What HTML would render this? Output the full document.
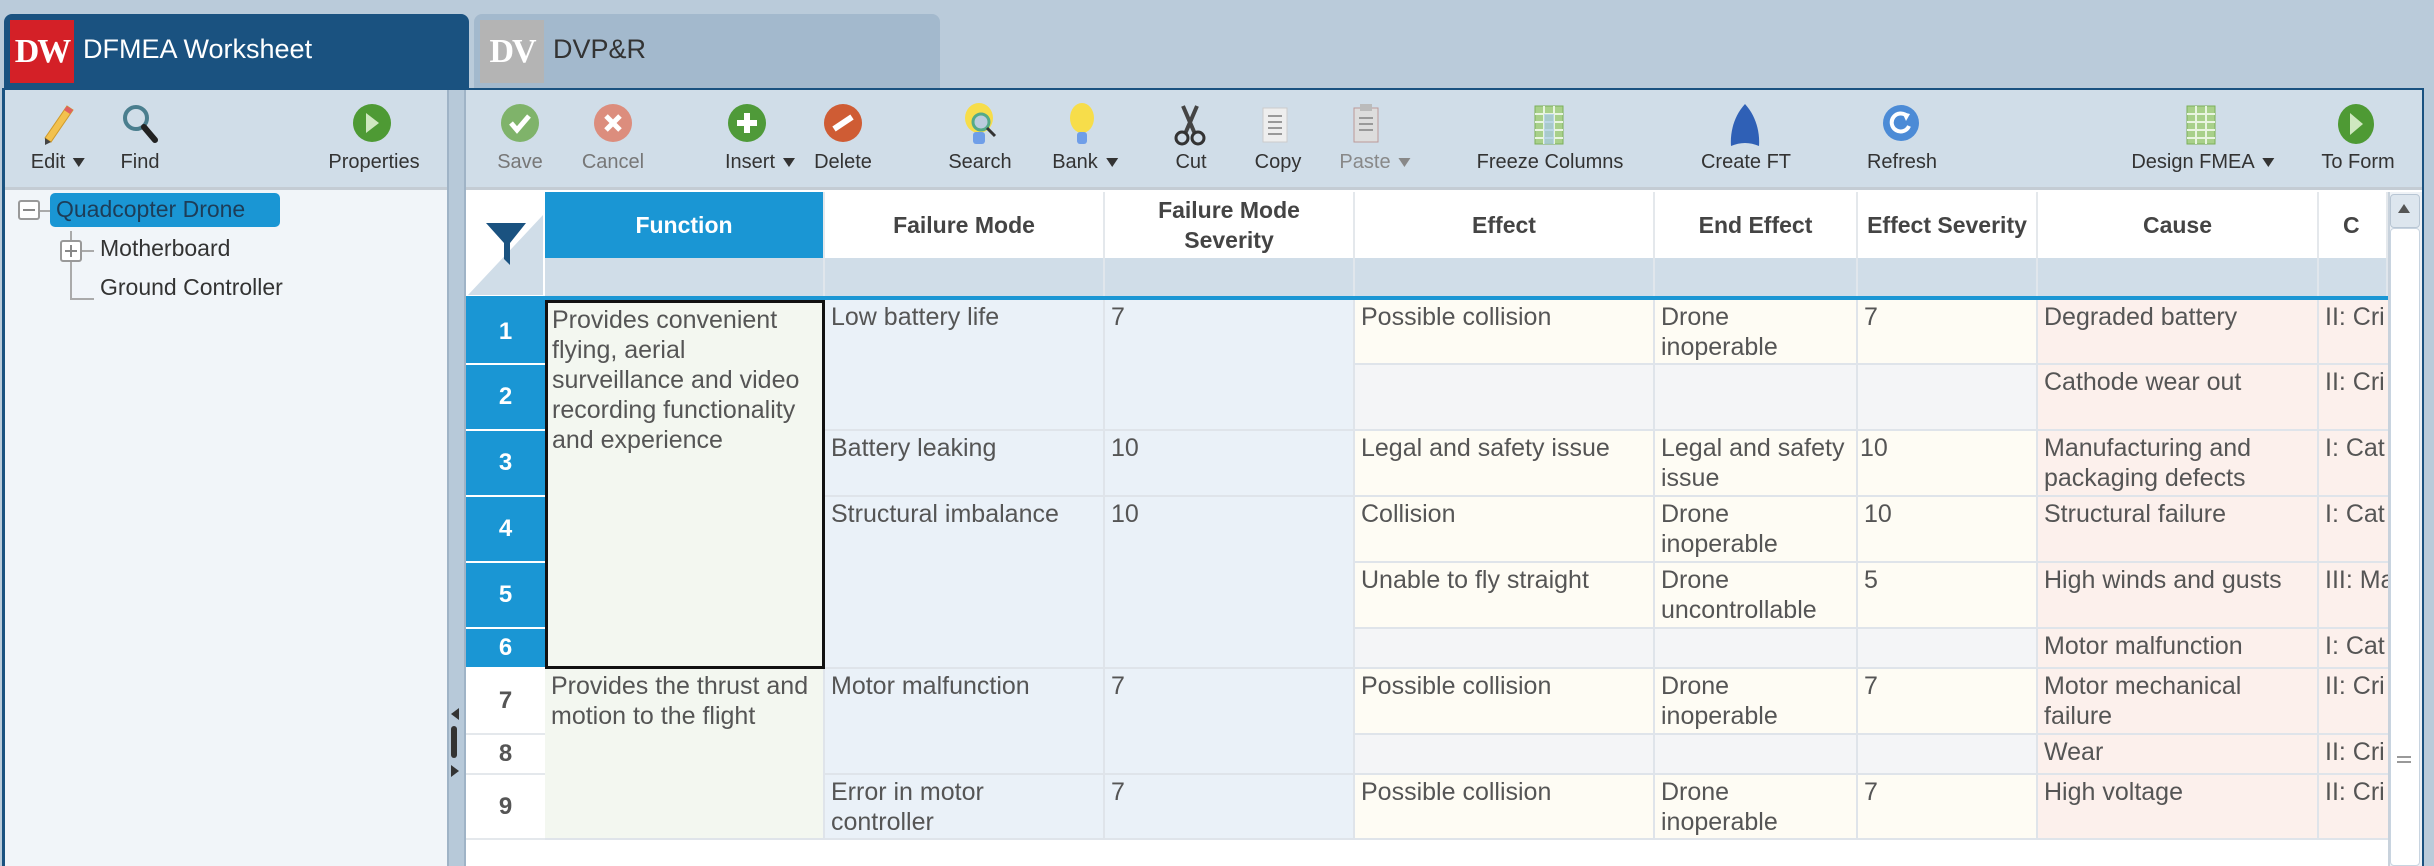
<!DOCTYPE html>
<html><head><meta charset="utf-8"><style>
*{margin:0;padding:0;box-sizing:border-box}
body{width:2434px;height:866px;overflow:hidden;background:#bacbda;font-family:"Liberation Sans",Arial,sans-serif;position:relative}
.a{position:absolute}
.c{position:absolute;font-size:25px;line-height:30px;color:#555;padding:2px 6px;overflow:hidden;white-space:nowrap;border-right:2px solid #dfe4ea;border-bottom:2px solid #dfe4ea}
.h{position:absolute;top:192px;height:66px;background:#fff;border-right:2px solid #e4e8ec;display:flex;align-items:center;justify-content:center;text-align:center;font-weight:bold;font-size:23px;line-height:30px;color:#444;overflow:hidden}
.f{position:absolute;top:258px;height:38px;background:#d0dde8;border-right:2px solid #e0e6ec}
.n{position:absolute;left:466px;width:79px;background:#1a96d4;color:#fff;font-weight:bold;font-size:24px;display:flex;align-items:center;justify-content:center;border-bottom:2px solid #fff}
.lb{position:absolute;top:150px;font-size:20px;line-height:24px;color:#333;white-space:nowrap;transform:translateX(-50%)}
.tri{display:inline-block;width:0;height:0;border-left:6px solid transparent;border-right:6px solid transparent;border-top:9px solid #333;margin-left:8px;vertical-align:middle}
.ic{position:absolute;top:102px;transform:translateX(-50%)}
.tr{font-size:23px;color:#333;position:absolute;white-space:nowrap}
</style></head><body>
<!-- tabs -->
<div class="a" style="left:4px;top:14px;width:465px;height:76px;background:#1a5280;border-radius:8px 8px 0 0"></div>
<div class="a" style="left:10px;top:20px;width:64px;height:63px;background:#d42027;color:#fff;font-family:'Liberation Serif',serif;font-weight:bold;font-size:34px;line-height:63px;text-align:center;letter-spacing:-2px">DW</div>
<div class="a" style="left:83px;top:34px;color:#fff;font-size:27px">DFMEA Worksheet</div>
<div class="a" style="left:474px;top:14px;width:466px;height:75px;background:#a3b9cd;border-radius:8px 8px 0 0"></div>
<div class="a" style="left:480px;top:20px;width:64px;height:63px;background:#b4b4b4;color:#fff;font-family:'Liberation Serif',serif;font-weight:bold;font-size:34px;line-height:63px;text-align:center;letter-spacing:-2px">DV</div>
<div class="a" style="left:553px;top:34px;color:#333;font-size:27px">DVP&amp;R</div>
<!-- main frame -->
<div class="a" style="left:2px;top:88px;width:2422px;height:778px;background:#1a5280"></div>
<div class="a" style="left:5px;top:90px;width:442px;height:776px;background:#f1f5f9"></div>
<div class="a" style="left:5px;top:90px;width:442px;height:100px;background:#d0dde8;border-bottom:3px solid #c4ccd4"></div>
<div class="a" style="left:447px;top:90px;width:19px;height:776px;background:#b7c9d9;border-left:2px solid #9fb3c6;border-right:2px solid #9fb3c6"></div>
<div class="a" style="left:466px;top:90px;width:1956px;height:776px;background:#fff"></div>
<div class="a" style="left:466px;top:90px;width:1956px;height:100px;background:#d0dde8;border-bottom:3px solid #c4ccd4"></div>
<!-- splitter arrows -->
<div class="a" style="left:451px;top:708px;width:0;height:0;border-top:6px solid transparent;border-bottom:6px solid transparent;border-right:8px solid #333"></div>
<div class="a" style="left:451px;top:726px;width:6px;height:32px;background:#333;border-radius:3px"></div>
<div class="a" style="left:451px;top:765px;width:0;height:0;border-top:6px solid transparent;border-bottom:6px solid transparent;border-left:8px solid #333"></div>
<!-- left toolbar -->
<svg class="ic" style="left:57px" width="40" height="44" viewBox="0 0 40 44"><path d="M30 4 L36 8 L14 40 L8 36 Z" fill="#f2c14e" stroke="#d09a2a"/><path d="M30 4 L36 8 L33 12 L27 8Z" fill="#e06060"/><path d="M8 36 L14 40 L8 43Z" fill="#444"/></svg>
<svg class="ic" style="left:140px" width="40" height="44" viewBox="0 0 40 44"><circle cx="16" cy="16" r="11" fill="none" stroke="#4a7e8e" stroke-width="4"/><path d="M24 25 L35 38" stroke="#222" stroke-width="6" stroke-linecap="round"/></svg>
<svg class="ic" style="left:372px" width="42" height="42" viewBox="0 0 42 42"><circle cx="21" cy="21" r="19" fill="#4e9a34"/><path d="M15 11 L28 21 L15 31Z" fill="#cfe8c0"/></svg>
<div class="lb" style="left:58px">Edit<span class="tri"></span></div>
<div class="lb" style="left:140px">Find</div>
<div class="lb" style="left:374px">Properties</div>
<!-- tree -->
<div class="a" style="left:18px;top:200px;width:22px;height:20px;border:2px solid #999;border-radius:3px;background:#fff"></div>
<div class="a" style="left:23px;top:209px;width:12px;height:2px;background:#888"></div>
<div class="a" style="left:40px;top:210px;width:10px;height:2px;background:#aaa"></div>
<div class="a" style="left:50px;top:193px;width:230px;height:34px;background:#1a96d4;border-radius:5px"></div>
<div class="tr" style="left:56px;top:196px;color:#1d3d58">Quadcopter Drone</div>
<div class="a" style="left:70px;top:231px;width:2px;height:69px;background:#aaa"></div>
<div class="a" style="left:70px;top:298px;width:24px;height:2px;background:#aaa"></div>
<div class="a" style="left:60px;top:240px;width:22px;height:22px;border:2px solid #999;border-radius:3px;background:#fff"></div>
<div class="a" style="left:65px;top:250px;width:12px;height:2px;background:#888"></div>
<div class="a" style="left:70px;top:245px;width:2px;height:12px;background:#888"></div>
<div class="a" style="left:82px;top:250px;width:12px;height:2px;background:#aaa"></div>
<div class="tr" style="left:100px;top:235px">Motherboard</div>
<div class="tr" style="left:100px;top:274px">Ground Controller</div>
<!-- right toolbar icons -->
<svg class="ic" style="left:520px" width="42" height="42"><circle cx="21" cy="21" r="19" fill="#7fb36a"/><path d="M12 21 L18 28 L30 14" stroke="#fff" stroke-width="5" fill="none"/></svg>
<svg class="ic" style="left:613px" width="42" height="42"><circle cx="21" cy="21" r="19" fill="#dc8d7d"/><path d="M14 14 L28 28 M28 14 L14 28" stroke="#fff" stroke-width="5"/></svg>
<svg class="ic" style="left:747px" width="42" height="42"><circle cx="21" cy="21" r="19" fill="#4f9a39"/><path d="M21 11 V31 M11 21 H31" stroke="#fff" stroke-width="6"/></svg>
<svg class="ic" style="left:843px" width="42" height="42"><circle cx="21" cy="21" r="19" fill="#cf5c34"/><path d="M12 27 L30 15" stroke="#fff" stroke-width="6"/></svg>
<svg class="ic" style="left:980px" width="42" height="46"><ellipse cx="20" cy="16" rx="14" ry="15" fill="#f7dd4a"/><rect x="14" y="30" width="12" height="12" rx="3" fill="#6f9ee8"/><circle cx="22" cy="20" r="8" fill="#bcd" stroke="#5a8" stroke-width="3"/><path d="M28 26 L36 34" stroke="#333" stroke-width="3"/></svg>
<svg class="ic" style="left:1082px" width="42" height="46"><ellipse cx="21" cy="16" rx="12" ry="15" fill="#f7dd4a"/><rect x="16" y="30" width="10" height="12" rx="3" fill="#6f9ee8"/></svg>
<svg class="ic" style="left:1190px" width="42" height="46"><path d="M14 4 L26 32 M28 4 L16 32" stroke="#444" stroke-width="4"/><circle cx="13" cy="36" r="6" fill="none" stroke="#333" stroke-width="3"/><circle cx="29" cy="36" r="6" fill="none" stroke="#333" stroke-width="3"/></svg>
<svg class="ic" style="left:1276px" width="42" height="46"><rect x="8" y="6" width="24" height="34" fill="#eee" stroke="#ccc"/><path d="M13 14H27M13 20H27M13 26H27M13 32H27" stroke="#999" stroke-width="2"/></svg>
<svg class="ic" style="left:1366px" width="42" height="46"><rect x="9" y="6" width="24" height="34" fill="#ddd" stroke="#b99"/><rect x="15" y="2" width="12" height="7" fill="#bbb"/><path d="M14 16H28M14 22H28M14 28H28" stroke="#999" stroke-width="2"/></svg>
<svg class="ic" style="left:1549px" width="42" height="46"><rect x="7" y="4" width="28" height="38" fill="#a8d08a" stroke="#7bb05a"/><path d="M7 12H35M7 20H35M7 28H35M7 36H35M16 4V42M26 4V42" stroke="#e8f4e0" stroke-width="2"/><rect x="16" y="12" width="10" height="30" fill="#a8c8e8" opacity=".7"/></svg>
<svg class="ic" style="left:1745px" width="42" height="48"><path d="M21 2 C10 14 6 30 7 44 Q21 38 35 44 C36 30 32 14 21 2Z" fill="#2f60b6"/></svg>
<svg class="ic" style="left:1901px" width="42" height="42"><circle cx="21" cy="21" r="18" fill="#4c8bd6"/><path d="M27 14 A9 9 0 1 0 29 24" stroke="#fff" stroke-width="4" fill="none"/><path d="M22 10 L30 12 L26 19Z" fill="#fff"/></svg>
<svg class="ic" style="left:2201px" width="42" height="46"><rect x="7" y="4" width="28" height="38" fill="#a8d08a" stroke="#7bb05a"/><path d="M7 12H35M7 20H35M7 28H35M7 36H35M16 4V42M26 4V42" stroke="#e8f4e0" stroke-width="2"/></svg>
<svg class="ic" style="left:2356px" width="42" height="44"><ellipse cx="21" cy="22" rx="18" ry="20" fill="#4e9a34"/><path d="M15 11 L28 22 L15 33Z" fill="#cfe8c0"/></svg>
<div class="lb" style="left:520px;color:#777">Save</div>
<div class="lb" style="left:613px;color:#777">Cancel</div>
<div class="lb" style="left:760px">Insert<span class="tri"></span></div>
<div class="lb" style="left:843px">Delete</div>
<div class="lb" style="left:980px">Search</div>
<div class="lb" style="left:1085px">Bank<span class="tri"></span></div>
<div class="lb" style="left:1191px">Cut</div>
<div class="lb" style="left:1278px">Copy</div>
<div class="lb" style="left:1375px;color:#888">Paste<span class="tri" style="border-top-color:#888"></span></div>
<div class="lb" style="left:1550px">Freeze Columns</div>
<div class="lb" style="left:1746px">Create FT</div>
<div class="lb" style="left:1902px">Refresh</div>
<div class="lb" style="left:2203px">Design FMEA<span class="tri"></span></div>
<div class="lb" style="left:2358px">To Form</div>
<!-- header -->
<div class="a" style="left:466px;top:192px;width:79px;height:104px;background:#fff"></div>
<svg class="a" style="left:468px;top:195px" width="75" height="100"><path d="M75 20 L75 100 L0 100Z" fill="#d0dde8"/><path d="M18 28 H58 L42 48 V70 L36 64 V48Z" fill="#1a5280"/></svg>
<div class="h" style="left:545px;width:280px;background:#1a96d4;color:#fff">Function</div>
<div class="h" style="left:825px;width:280px">Failure Mode</div>
<div class="h" style="left:1105px;width:250px">Failure Mode<br>Severity</div>
<div class="h" style="left:1355px;width:300px">Effect</div>
<div class="h" style="left:1655px;width:203px">End Effect</div>
<div class="h" style="left:1858px;width:180px">Effect Severity</div>
<div class="h" style="left:2038px;width:281px">Cause</div>
<div class="h" style="left:2319px;width:69px;justify-content:flex-start;padding-left:24px">C</div>
<div class="f" style="left:545px;width:280px"></div><div class="f" style="left:825px;width:280px"></div><div class="f" style="left:1105px;width:250px"></div><div class="f" style="left:1355px;width:300px"></div><div class="f" style="left:1655px;width:203px"></div><div class="f" style="left:1858px;width:180px"></div><div class="f" style="left:2038px;width:281px"></div><div class="f" style="left:2319px;width:69px"></div>
<div class="a" style="left:466px;top:296px;width:1922px;height:4px;background:#1a96d4"></div>
<!-- row numbers -->
<div class="n" style="top:300px;height:65px">1</div>
<div class="n" style="top:365px;height:66px">2</div>
<div class="n" style="top:431px;height:66px">3</div>
<div class="n" style="top:497px;height:66px">4</div>
<div class="n" style="top:563px;height:66px">5</div>
<div class="n" style="top:629px;height:40px">6</div>
<div class="n" style="top:669px;height:66px;background:#fff;color:#555;border-bottom:2px solid #e4e8ec">7</div>
<div class="n" style="top:735px;height:40px;background:#fff;color:#555;border-bottom:2px solid #e4e8ec">8</div>
<div class="n" style="top:775px;height:65px;background:#fff;color:#555;border-bottom:2px solid #e4e8ec">9</div>
<!-- function -->
<div class="c" style="left:545px;top:300px;width:280px;height:369px;background:#f3f7f0;border:3px solid #111;white-space:normal;padding-left:4px">Provides convenient flying, aerial surveillance and video recording functionality and experience</div>
<div class="c" style="left:545px;top:669px;width:280px;height:171px;background:#f3f7f0;white-space:normal;padding-right:0">Provides the thrust and motion to the flight</div>
<!-- failure mode + sev -->
<div class="c" style="left:825px;top:300px;width:280px;height:131px;background:#eaf1f8">Low battery life</div>
<div class="c" style="left:825px;top:431px;width:280px;height:66px;background:#eaf1f8">Battery leaking</div>
<div class="c" style="left:825px;top:497px;width:280px;height:172px;background:#eaf1f8">Structural imbalance</div>
<div class="c" style="left:825px;top:669px;width:280px;height:106px;background:#eaf1f8">Motor malfunction</div>
<div class="c" style="left:825px;top:775px;width:280px;height:65px;background:#eaf1f8">Error in motor<br>controller</div>
<div class="c" style="left:1105px;top:300px;width:250px;height:131px;background:#eaf1f8">7</div>
<div class="c" style="left:1105px;top:431px;width:250px;height:66px;background:#eaf1f8">10</div>
<div class="c" style="left:1105px;top:497px;width:250px;height:172px;background:#eaf1f8">10</div>
<div class="c" style="left:1105px;top:669px;width:250px;height:106px;background:#eaf1f8">7</div>
<div class="c" style="left:1105px;top:775px;width:250px;height:65px;background:#eaf1f8">7</div>
<!-- effect columns -->
<div class="c" style="left:1355px;top:300px;width:300px;height:65px;background:#fefcf4">Possible collision</div>
<div class="c" style="left:1655px;top:300px;width:203px;height:65px;background:#fefcf4">Drone<br>inoperable</div>
<div class="c" style="left:1858px;top:300px;width:180px;height:65px;background:#fefcf4">7</div>
<div class="c" style="left:1355px;top:365px;width:300px;height:66px;background:#f4f5f7"></div>
<div class="c" style="left:1655px;top:365px;width:203px;height:66px;background:#f4f5f7"></div>
<div class="c" style="left:1858px;top:365px;width:180px;height:66px;background:#f4f5f7"></div>
<div class="c" style="left:1355px;top:431px;width:300px;height:66px;background:#fefcf4">Legal and safety issue</div>
<div class="c" style="left:1655px;top:431px;width:203px;height:66px;background:#fefcf4;padding-right:0">Legal and safety<br>issue</div>
<div class="c" style="left:1858px;top:431px;width:180px;height:66px;background:#fefcf4;padding-left:2px">10</div>
<div class="c" style="left:1355px;top:497px;width:300px;height:66px;background:#fefcf4">Collision</div>
<div class="c" style="left:1655px;top:497px;width:203px;height:66px;background:#fefcf4">Drone<br>inoperable</div>
<div class="c" style="left:1858px;top:497px;width:180px;height:66px;background:#fefcf4">10</div>
<div class="c" style="left:1355px;top:563px;width:300px;height:66px;background:#fefcf4">Unable to fly straight</div>
<div class="c" style="left:1655px;top:563px;width:203px;height:66px;background:#fefcf4">Drone<br>uncontrollable</div>
<div class="c" style="left:1858px;top:563px;width:180px;height:66px;background:#fefcf4">5</div>
<div class="c" style="left:1355px;top:629px;width:300px;height:40px;background:#f4f5f7"></div>
<div class="c" style="left:1655px;top:629px;width:203px;height:40px;background:#f4f5f7"></div>
<div class="c" style="left:1858px;top:629px;width:180px;height:40px;background:#f4f5f7"></div>
<div class="c" style="left:1355px;top:669px;width:300px;height:66px;background:#fefcf4">Possible collision</div>
<div class="c" style="left:1655px;top:669px;width:203px;height:66px;background:#fefcf4">Drone<br>inoperable</div>
<div class="c" style="left:1858px;top:669px;width:180px;height:66px;background:#fefcf4">7</div>
<div class="c" style="left:1355px;top:735px;width:300px;height:40px;background:#f4f5f7"></div>
<div class="c" style="left:1655px;top:735px;width:203px;height:40px;background:#f4f5f7"></div>
<div class="c" style="left:1858px;top:735px;width:180px;height:40px;background:#f4f5f7"></div>
<div class="c" style="left:1355px;top:775px;width:300px;height:65px;background:#fefcf4">Possible collision</div>
<div class="c" style="left:1655px;top:775px;width:203px;height:65px;background:#fefcf4">Drone<br>inoperable</div>
<div class="c" style="left:1858px;top:775px;width:180px;height:65px;background:#fefcf4">7</div>
<!-- cause -->
<div class="c" style="left:2038px;top:300px;width:281px;height:65px;background:#fcf0ec">Degraded battery</div>
<div class="c" style="left:2038px;top:365px;width:281px;height:66px;background:#fcf0ec">Cathode wear out</div>
<div class="c" style="left:2038px;top:431px;width:281px;height:66px;background:#fcf0ec">Manufacturing and<br>packaging defects</div>
<div class="c" style="left:2038px;top:497px;width:281px;height:66px;background:#fcf0ec">Structural failure</div>
<div class="c" style="left:2038px;top:563px;width:281px;height:66px;background:#fcf0ec">High winds and gusts</div>
<div class="c" style="left:2038px;top:629px;width:281px;height:40px;background:#fcf0ec">Motor malfunction</div>
<div class="c" style="left:2038px;top:669px;width:281px;height:66px;background:#fcf0ec">Motor mechanical<br>failure</div>
<div class="c" style="left:2038px;top:735px;width:281px;height:40px;background:#fcf0ec">Wear</div>
<div class="c" style="left:2038px;top:775px;width:281px;height:65px;background:#fcf0ec">High voltage</div>
<div class="c" style="left:2319px;top:300px;width:69px;height:65px;background:#fcf0ec;border-right:0">II: Cri</div>
<div class="c" style="left:2319px;top:365px;width:69px;height:66px;background:#fcf0ec;border-right:0">II: Cri</div>
<div class="c" style="left:2319px;top:431px;width:69px;height:66px;background:#fcf0ec;border-right:0">I: Cat</div>
<div class="c" style="left:2319px;top:497px;width:69px;height:66px;background:#fcf0ec;border-right:0">I: Cat</div>
<div class="c" style="left:2319px;top:563px;width:69px;height:66px;background:#fcf0ec;border-right:0">III: Ma</div>
<div class="c" style="left:2319px;top:629px;width:69px;height:40px;background:#fcf0ec;border-right:0">I: Cat</div>
<div class="c" style="left:2319px;top:669px;width:69px;height:66px;background:#fcf0ec;border-right:0">II: Cri</div>
<div class="c" style="left:2319px;top:735px;width:69px;height:40px;background:#fcf0ec;border-right:0">II: Cri</div>
<div class="c" style="left:2319px;top:775px;width:69px;height:65px;background:#fcf0ec;border-right:0">II: Cri</div>
<!-- scrollbar -->
<div class="a" style="left:2388px;top:192px;width:34px;height:674px;background:#eef2f6;border-left:2px solid #c8d2dc"></div>
<div class="a" style="left:2390px;top:194px;width:30px;height:34px;background:#dde6ee;border:1px solid #b8c6d4;border-radius:4px"></div>
<div class="a" style="left:2398px;top:204px;width:0;height:0;border-left:6px solid transparent;border-right:6px solid transparent;border-bottom:9px solid #555"></div>
<div class="a" style="left:2390px;top:228px;width:30px;height:638px;background:#fff;border:1px solid #c8d4e0;border-radius:4px"></div>
<div class="a" style="left:2397px;top:756px;width:14px;height:2px;background:#999"></div>
<div class="a" style="left:2397px;top:761px;width:14px;height:2px;background:#999"></div>
</body></html>
